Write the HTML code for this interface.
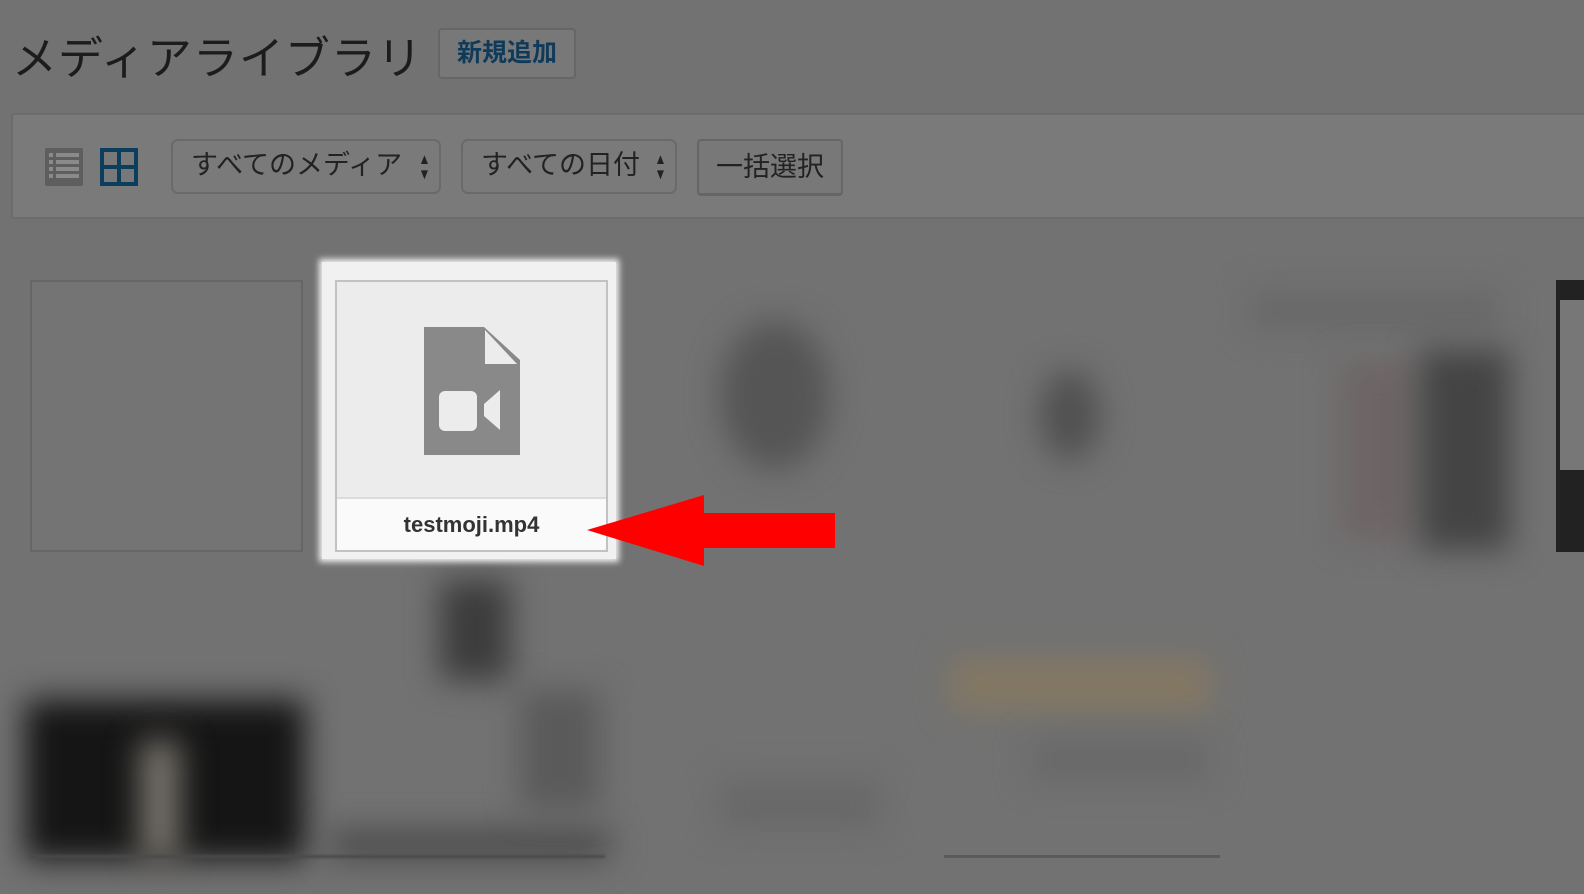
<!DOCTYPE html>
<html><head><meta charset="utf-8"><style>
*{margin:0;padding:0;box-sizing:border-box}
body{width:1584px;height:894px;background:#727272;position:relative;overflow:hidden;font-family:"Liberation Sans","Noto Sans CJK JP",sans-serif}
.a{position:absolute}
.b{position:absolute;filter:blur(16px)}
h1{position:absolute;left:12px;top:22px;font-size:45px;font-weight:400;color:#1c1c1c;letter-spacing:1px}
.btn{position:absolute;border:2px solid #666;border-radius:4px;background:#787878}
.sel{position:absolute;border:2px solid #6a6a6a;border-radius:7px;background:#7a7a7a;font-size:27px;color:#222;padding-left:18px;line-height:48px}
.arr{position:absolute;right:7px;top:11px;font-size:15px;line-height:15px;color:#222;transform:scaleX(0.8)}
</style></head><body>
<h1>メディアライブラリ</h1>
<div class="btn" style="left:438px;top:28px;width:138px;height:51px;font-size:25px;font-weight:700;color:#0f3a5a;text-align:center;line-height:47px">新規追加</div>
<div class="a" style="left:11px;top:113px;width:1580px;height:106px;background:#7a7a7a;border:2px solid #6c6c6c"></div>
<svg class="a" style="left:45px;top:148px" width="38" height="38"><rect width="38" height="38" rx="2" fill="#5e5e5e"/><g fill="#8a8a8a"><rect x="4" y="5" width="4" height="4"/><rect x="11" y="5" width="23" height="4"/><rect x="4" y="12" width="4" height="4"/><rect x="11" y="12" width="23" height="4"/><rect x="4" y="19" width="4" height="4"/><rect x="11" y="19" width="23" height="4"/><rect x="4" y="26" width="4" height="4"/><rect x="11" y="26" width="23" height="4"/></g></svg>
<svg class="a" style="left:100px;top:148px" width="38" height="38"><rect width="38" height="38" fill="#0c3d5c"/><rect x="4" y="4" width="13" height="13" fill="#787878"/><rect x="21" y="4" width="13" height="13" fill="#787878"/><rect x="4" y="21" width="13" height="13" fill="#787878"/><rect x="21" y="21" width="13" height="13" fill="#787878"/></svg>
<div class="sel" style="left:171px;top:139px;width:270px;height:55px">すべてのメディア<div class="arr">▲<br>▼</div></div>
<div class="sel" style="left:461px;top:139px;width:216px;height:55px">すべての日付<div class="arr">▲<br>▼</div></div>
<div class="btn" style="left:697px;top:139px;width:146px;height:57px;font-size:27px;color:#222;text-align:center;line-height:52px;border-bottom-width:3px">一括選択</div>

<div class="a" style="left:30px;top:280px;width:273px;height:272px;border:2px solid #666;background:#747474"></div>
<div class="b" style="left:720px;top:320px;width:110px;height:150px;background:#555;border-radius:50%"></div>
<div class="b" style="left:1040px;top:370px;width:60px;height:90px;background:#505050;border-radius:50%"></div>
<div class="b" style="left:1250px;top:290px;width:250px;height:40px;background:#686868"></div>
<div class="b" style="left:1340px;top:360px;width:80px;height:180px;background:#6d6565"></div>
<div class="b" style="left:1420px;top:350px;width:90px;height:200px;background:#444"></div>
<div class="a" style="left:1556px;top:280px;width:28px;height:272px;background:#222"></div>
<div class="a" style="left:1560px;top:300px;width:24px;height:170px;background:#777"></div>

<div class="b" style="left:25px;top:700px;width:280px;height:160px;background:#151515"></div>
<div class="b" style="left:140px;top:740px;width:40px;height:120px;background:#7a756e"></div>
<div class="b" style="left:440px;top:580px;width:70px;height:100px;background:#3c3c3c"></div>
<div class="b" style="left:330px;top:830px;width:280px;height:30px;background:#4a4a4a"></div>
<div class="b" style="left:520px;top:690px;width:80px;height:120px;background:#5a5a5a"></div>
<div class="b" style="left:950px;top:660px;width:260px;height:50px;background:#857862"></div>
<div class="b" style="left:1030px;top:740px;width:180px;height:40px;background:#686868"></div>
<div class="b" style="left:720px;top:780px;width:160px;height:50px;background:#686868"></div>
<div class="a" style="left:30px;top:855px;width:575px;height:3px;background:#4a4a4a;filter:blur(1px)"></div>
<div class="a" style="left:944px;top:855px;width:276px;height:3px;background:#5a5a5a"></div>

<div class="a" style="left:322px;top:262px;width:294px;height:297px;background:#f1f1f1;box-shadow:0 0 6px 3px #f1f1f1"></div>
<div class="a" style="left:335px;top:280px;width:273px;height:272px;border:2px solid #c2c2c2;background:#ececec"></div>
<div class="a" style="left:337px;top:497px;width:269px;height:53px;background:#fafafa;border-top:2px solid #dcdcdc;font-size:22px;font-weight:700;color:#333;text-align:center;line-height:51px">testmoji.mp4</div>
<svg class="a" style="left:424px;top:327px" width="96" height="128"><path d="M0 0H60L96 33V128H0Z" fill="#898989"/><path d="M61 3V37H93Z" fill="#ececec"/><rect x="15" y="64" width="38" height="40" rx="6" fill="#ececec"/><path d="M76 63V103L60 89V77Z" fill="#ececec"/></svg>
<svg class="a" style="left:580px;top:490px" width="260" height="80"><path d="M7 40L124 5V23H255V58H124V76Z" fill="#f00"/></svg>
</body></html>
